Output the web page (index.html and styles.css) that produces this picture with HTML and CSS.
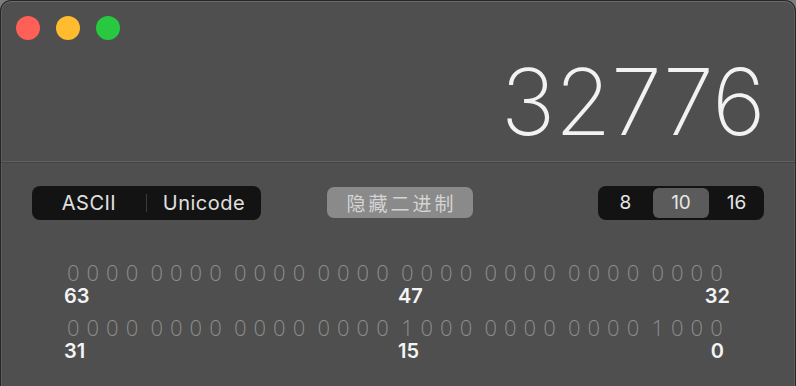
FILE: index.html
```html
<!DOCTYPE html>
<html lang="zh">
<head>
<meta charset="utf-8">
<link rel="stylesheet" href="styles.css">
</head>
<body>
<div class="window">
  <div class="top">
    <div class="lights">
      <span class="light red"></span>
      <span class="light yellow"></span>
      <span class="light green"></span>
    </div>
    <div class="display">32776</div>
  </div>
  <div class="bottom">
    <div class="controls">
      <div class="seg seg-text">
        <span class="seg-item">ASCII</span>
        <span class="seg-div"></span>
        <span class="seg-item">Unicode</span>
      </div>
      <div class="hide-btn">隐藏二进制</div>
      <div class="seg seg-base">
        <span class="base-item">8</span>
        <span class="base-item active">10</span>
        <span class="base-item">16</span>
      </div>
    </div>
    <div class="bits">
      <div class="bit-row">
        <span class="grp">0000</span><span class="grp">0000</span><span class="grp">0000</span><span class="grp">0000</span><span class="grp">0000</span><span class="grp">0000</span><span class="grp">0000</span><span class="grp">0000</span>
      </div>
      <div class="label-row">
        <span class="lbl l-start">63</span><span class="lbl l-mid">47</span><span class="lbl l-end">32</span>
      </div>
      <div class="bit-row">
        <span class="grp">0000</span><span class="grp">0000</span><span class="grp">0000</span><span class="grp">0000</span><span class="grp">1000</span><span class="grp">0000</span><span class="grp">0000</span><span class="grp">1000</span>
      </div>
      <div class="label-row">
        <span class="lbl l-start">31</span><span class="lbl l-mid">15</span><span class="lbl l-end l-zero">0</span>
      </div>
    </div>
  </div>
</div>
</body>
</html>
```
FILE: styles.css
```css
html, body {
  margin: 0;
  padding: 0;
  background: #7d7d7d;
  height: 100%;
  overflow: hidden;
}
.window {
  box-sizing: border-box;
  height: 100%;
  background: #4f4f4f;
  border: 1px solid #262626;
  border-bottom: none;
  border-radius: 11px 11px 0 0;
  box-shadow: inset 0 1px 0 #6c6c6c, inset 1px 0 0 #5e5e5e, inset -1px 0 0 #5e5e5e;
  font-family: "Inter", "Liberation Sans", sans-serif;
  display: flex;
  flex-direction: column;
}
.top {
  height: 160px;
  border-bottom: 1px solid #5f5f5f;
  box-shadow: 0 1px 0 #444;
  display: flex;
  flex-direction: column;
}
.lights {
  display: flex;
  gap: 16px;
  padding: 15px 0 0 15px;
}
.light {
  width: 24px;
  height: 24px;
  border-radius: 50%;
  display: block;
}
.red { background: #fe5f57; }
.yellow { background: #febc2e; }
.green { background: #28c840; }
.display {
  text-align: right;
  padding-right: 30px;
  margin-top: 12px;
  font-family: "Inter", "Open Sans", sans-serif;
  font-weight: 200;
  font-size: 92px;
  line-height: 100px;
  color: #f2f2f2;
  letter-spacing: -0.6px;
}
.bottom {
  flex: 1;
  display: flex;
  flex-direction: column;
}
.controls {
  display: flex;
  align-items: flex-start;
  padding: 24px 31px 0 31px;
}
.seg {
  display: flex;
  align-items: center;
  background: #131313;
  border-radius: 8px;
  height: 34px;
  box-sizing: border-box;
}
.seg-text {
  width: 229px;
}
.seg-item {
  flex: 1;
  text-align: center;
  color: #e0e0e0;
  font-size: 20px;
  letter-spacing: 0.5px;
}
.seg-div {
  width: 1px;
  height: 18px;
  background: #3a3a3a;
}
.hide-btn {
  margin-top: 1px;
  margin-left: 66px;
  width: 146px;
  height: 31px;
  box-sizing: border-box;
  background: #8a8a8a;
  border-radius: 7px;
  color: #d4d4d4;
  font-family: "Noto Sans CJK SC", sans-serif;
  font-size: 19px;
  line-height: 31px;
  text-align: center;
  letter-spacing: 3px;
  padding-left: 3px;
}
.seg-base {
  margin-left: auto;
  width: 166px;
  padding: 2px 0;
}
.base-item {
  flex: 1;
  height: 30px;
  line-height: 30px;
  text-align: center;
  color: #e6e6e6;
  font-size: 19px;
}
.base-item.active {
  background: #5b5b5b;
  border-radius: 6px;
  flex: 0 0 56px;
}
.bits {
  padding: 41px 0 0 66px;
  width: 668px;
}
.bit-row {
  display: grid;
  grid-template-columns: repeat(8, 1fr);
  height: 22px;
  align-items: center;
}
.grp {
  font-family: "Open Sans", sans-serif;
  font-weight: 300;
  font-size: 22px;
  color: #8c8c8c;
  letter-spacing: 7px;
  line-height: 18px;
}
.label-row {
  display: grid;
  grid-template-columns: 1fr 1fr;
  position: relative;
  height: 21px;
  padding-top: 3px;
  margin-bottom: 9px;
}
.lbl {
  font-family: "Inter", sans-serif;
  font-size: 20px;
  font-weight: 600;
  color: #f4f4f4;
  line-height: 20px;
}
.l-start { margin-left: -3px; }
.l-mid { margin-left: -3px; }
.l-end {
  position: absolute;
  right: 5px;
  top: 3px;
}
.l-zero { right: 11px; }
```
